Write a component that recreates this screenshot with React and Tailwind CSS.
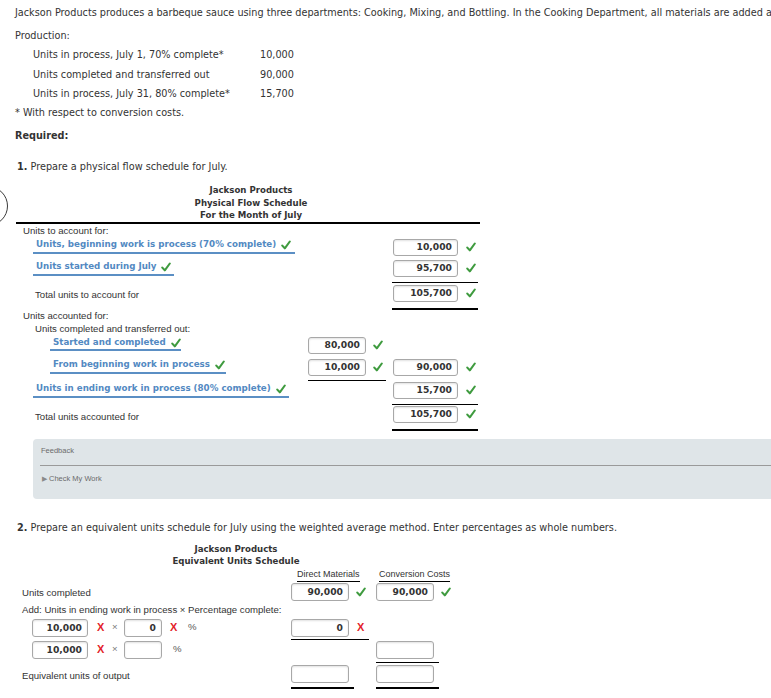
import React from "react";

const DV = "[font-family:'DejaVu_Sans',Verdana,sans-serif]";
const LS = "[font-family:'Liberation_Sans',Arial,sans-serif]";

function Check({ className = "" }) {
  return (
    <svg width="10" height="10" viewBox="0 0 10 10" className={"shrink-0 " + className}>
      <path d="M1.3 5.6 L3.8 8.3 L8.8 1.5" fill="none" stroke="#3f9b3f" strokeWidth="2.1" strokeLinecap="round" strokeLinejoin="round" />
    </svg>
  );
}

function RedX({ className = "" }) {
  return <span className={LS + " font-bold text-[11px] leading-none text-[#e3222a] " + className}>X</span>;
}

function Box({ v = "", w = "w-[65px]", h = "h-[17px]" }) {
  return (
    <div className={w + " " + h + " " + DV + " shrink-0 border border-[#a8a8a8] rounded-[3px] bg-white shadow-[inset_0_1px_2px_rgba(0,0,0,0.12)] flex items-center justify-end pr-[5px] font-bold text-[9.2px] text-[#333]"}>
      {v}
    </div>
  );
}

function BlueLabel({ children, w, h = "h-[15px]", ml = "ml-[17px]", mt = "" }) {
  return (
    <div className={w + " " + h + " " + ml + " " + mt + " " + DV + " flex items-center border-b-2 border-[#5b8fc4] pl-[3px] font-bold text-[8.7px] text-[#5289c2] whitespace-nowrap"}>
      <span>{children}</span>
      <Check className="ml-[5px]" />
    </div>
  );
}

export default function App() {
  return (
    <div className={"relative w-[771px] h-[698px] overflow-hidden bg-white pl-[15px] text-[#333] text-[9.7px] " + DV}>
      <div className="absolute left-[-32px] top-[186px] w-[40px] h-[40px] rounded-full border-[1.5px] border-[#3a3a3a]" />

      <div className="h-[26px] flex items-center whitespace-nowrap">
        Jackson Products produces a barbeque sauce using three departments: Cooking, Mixing, and Bottling. In the Cooking Department, all materials are added at the beginning of the process.
      </div>
      <div className="h-[20px] flex items-center">Production:</div>
      <div className="pl-[18px]">
        <div className="h-[19px] flex items-center"><span className="w-[227px]">Units in process, July 1, 70% complete*</span><span>10,000</span></div>
        <div className="h-[20px] flex items-center"><span className="w-[227px]">Units completed and transferred out</span><span>90,000</span></div>
        <div className="h-[19px] flex items-center"><span className="w-[227px]">Units in process, July 31, 80% complete*</span><span>15,700</span></div>
      </div>
      <div className="h-[19px] flex items-center">* With respect to conversion costs.</div>
      <div className="h-[26px] flex items-center font-bold">Required:</div>
      <div className="pt-[11px] leading-[14px] pl-[2px]"><span className="font-bold">1.</span>&nbsp;Prepare a physical flow schedule for July.</div>

      {/* Physical flow schedule */}
      <div className={"mt-[9px] ml-[1px] w-[464px] text-[9.6px] " + LS}>
        <div className={"pl-[6px] pt-[1px] text-center font-bold leading-[12.5px] text-[8.6px] " + DV}>
          <div>Jackson Products</div>
          <div>Physical Flow Schedule</div>
          <div>For the Month of July</div>
        </div>
        <div className="h-[2px] bg-black" />

        <div className="h-[15px] flex items-center pl-[7px]">Units to account for:</div>

        <div className="flex">
          <div className="w-[292px]"><BlueLabel w="w-[262px]">Units, beginning work is process (70% complete)</BlueLabel></div>
          <div className="w-[84px]" />
          <div className="w-[86px] flex items-center pl-[1px]"><Box v="10,000" /><Check className="ml-[8px]" /></div>
        </div>

        <div className="flex mt-[4px]">
          <div className="w-[292px]"><BlueLabel w="w-[141px]" mt="mt-[1px]">Units started during July</BlueLabel></div>
          <div className="w-[84px]" />
          <div className="w-[86px] flex items-center pl-[1px]"><Box v="95,700" /><Check className="ml-[8px]" /></div>
        </div>

        <div className="flex mt-[5px]">
          <div className="w-[292px] flex items-center pl-[19px]">Total units to account for</div>
          <div className="w-[84px]" />
          <div className="w-[86px] border-t border-black pt-[2px] pb-[6px] border-b-2 pl-[1px] flex items-center"><Box v="105,700" /><Check className="ml-[8px]" /></div>
        </div>

        <div className="h-[14px] flex items-center pl-[7px]">Units accounted for:</div>
        <div className="h-[12px] flex items-center pl-[19px]">Units completed and transferred out:</div>

        <div className="flex mt-[1px]">
          <div className="w-[292px]"><BlueLabel w="w-[131px]" h="h-[14px]" ml="ml-[34px]">Started and completed</BlueLabel></div>
          <div className="w-[84px] flex items-center"><Box v="80,000" w="w-[58px]" /><Check className="ml-[7px]" /></div>
          <div className="w-[86px]" />
        </div>

        <div className="flex mt-[5px] items-start">
          <div className="w-[292px]"><BlueLabel w="w-[176px]" ml="ml-[34px]">From beginning work in process</BlueLabel></div>
          <div className="w-[84px]">
            <div className="w-[78px] border-b border-black pb-[4px] flex items-center"><Box v="10,000" w="w-[58px]" /><Check className="ml-[7px]" /></div>
          </div>
          <div className="w-[86px] flex items-center pl-[1px]"><Box v="90,000" /><Check className="ml-[8px]" /></div>
        </div>

        <div className="flex mt-[1px]">
          <div className="w-[292px]"><BlueLabel w="w-[256px]" h="h-[16px]">Units in ending work in process (80% complete)</BlueLabel></div>
          <div className="w-[84px]" />
          <div className="w-[86px] flex items-center pl-[1px]"><Box v="15,700" /><Check className="ml-[8px]" /></div>
        </div>

        <div className="flex mt-[5px]">
          <div className="w-[292px] flex items-center pl-[19px]">Total units accounted for</div>
          <div className="w-[84px]" />
          <div className="w-[86px] border-t border-black pt-[1px] pb-[6px] border-b-2 pl-[1px] flex items-center"><Box v="105,700" /><Check className="ml-[8px]" /></div>
        </div>
      </div>

      {/* Feedback */}
      <div className={"mt-[8px] ml-[18px] mr-[-10px] h-[60px] rounded-[4px] bg-[#dfe5e8] text-[7.5px] text-[#6b6b6b] " + LS}>
        <div className="pl-[8px] pt-[7px] leading-[10px]">Feedback</div>
        <div className="ml-[7px] mt-[9px] h-px bg-[#9a9a9a]" />
        <div className="pl-[9px] pt-[8px] leading-[10px] flex items-center">
          <span className="text-[6.5px] text-[#8a8a8a] mr-[2px]">&#9654;</span>Check My Work
        </div>
      </div>

      {/* Part 2 */}
      <div className="mt-[20px] h-[20px] flex items-center pl-[2px] whitespace-nowrap"><span className="font-bold">2.</span>&nbsp;Prepare an equivalent units schedule for July using the weighted average method. Enter percentages as whole numbers.</div>

      <div className="mt-[4px] w-[442px] text-center font-bold leading-[12px] text-[8.6px]">
        <div>Jackson Products</div>
        <div>Equivalent Units Schedule</div>
      </div>

      <div className={"text-[9.6px] " + LS}>
        <div className="flex h-[15px]">
          <div className="w-[276px]" />
          <div className="w-[85px]"><span className="ml-[6px] inline-block border-b border-black leading-[13px] text-[9px]">Direct Materials</span></div>
          <div><span className="ml-[3px] inline-block border-b border-black leading-[13px] text-[9px]">Conversion Costs</span></div>
        </div>

        <div className="flex mt-[1px]">
          <div className="w-[276px] flex items-center pl-[7px] pt-[3px]">Units completed</div>
          <div className="w-[85px] flex items-center"><Box v="90,000" w="w-[58px]" h="h-[18px]" /><Check className="ml-[7px]" /></div>
          <div className="flex items-center"><Box v="90,000" w="w-[58px]" h="h-[18px]" /><Check className="ml-[7px]" /></div>
        </div>

        <div className="h-[18px] flex items-center pl-[7px] pt-[1px]">Add: Units in ending work in process &times; Percentage complete:</div>

        <div className="flex items-start">
          <div className="w-[276px] flex items-center pl-[17px] h-[18px]">
            <Box v="10,000" w="w-[56px]" h="h-[18px]" />
            <span className="w-[15px] pl-[9px] flex"><RedX /></span>
            <span className="w-[21px] pl-[9px] text-[#777]">&times;</span>
            <Box v="0" w="w-[38px]" h="h-[18px]" />
            <span className="w-[26px] pl-[8px] flex"><RedX /></span>
            <span className="text-[#555]">%</span>
          </div>
          <div className="w-[85px]">
            <div className="w-[78px] border-b border-black pb-[2px] flex items-center"><Box v="0" w="w-[58px]" h="h-[18px]" /><RedX className="ml-[8px]" /></div>
          </div>
          <div />
        </div>

        <div className="flex items-start mt-[1px]">
          <div className="w-[276px] flex items-center pl-[17px] h-[18px]">
            <Box v="10,000" w="w-[56px]" h="h-[18px]" />
            <span className="w-[15px] pl-[9px] flex"><RedX /></span>
            <span className="w-[21px] pl-[9px] text-[#777]">&times;</span>
            <Box v="" w="w-[38px]" h="h-[18px]" />
            <span className="pl-[11px] text-[#555]">%</span>
          </div>
          <div className="w-[85px]" />
          <div className="w-[63px] border-b border-black pb-[3px]"><Box v="" w="w-[58px]" h="h-[18px]" /></div>
        </div>

        <div className="flex items-start mt-[2px]">
          <div className="w-[276px] h-[18px] mt-[3px] flex items-center pl-[7px]">Equivalent units of output</div>
          <div className="w-[85px]">
            <div className="w-[63px] border-b-2 border-black pb-[4px]"><Box v="" w="w-[58px]" h="h-[18px]" /></div>
          </div>
          <div className="w-[63px] border-b-2 border-black pb-[4px]"><Box v="" w="w-[58px]" h="h-[18px]" /></div>
        </div>
      </div>
    </div>
  );
}
